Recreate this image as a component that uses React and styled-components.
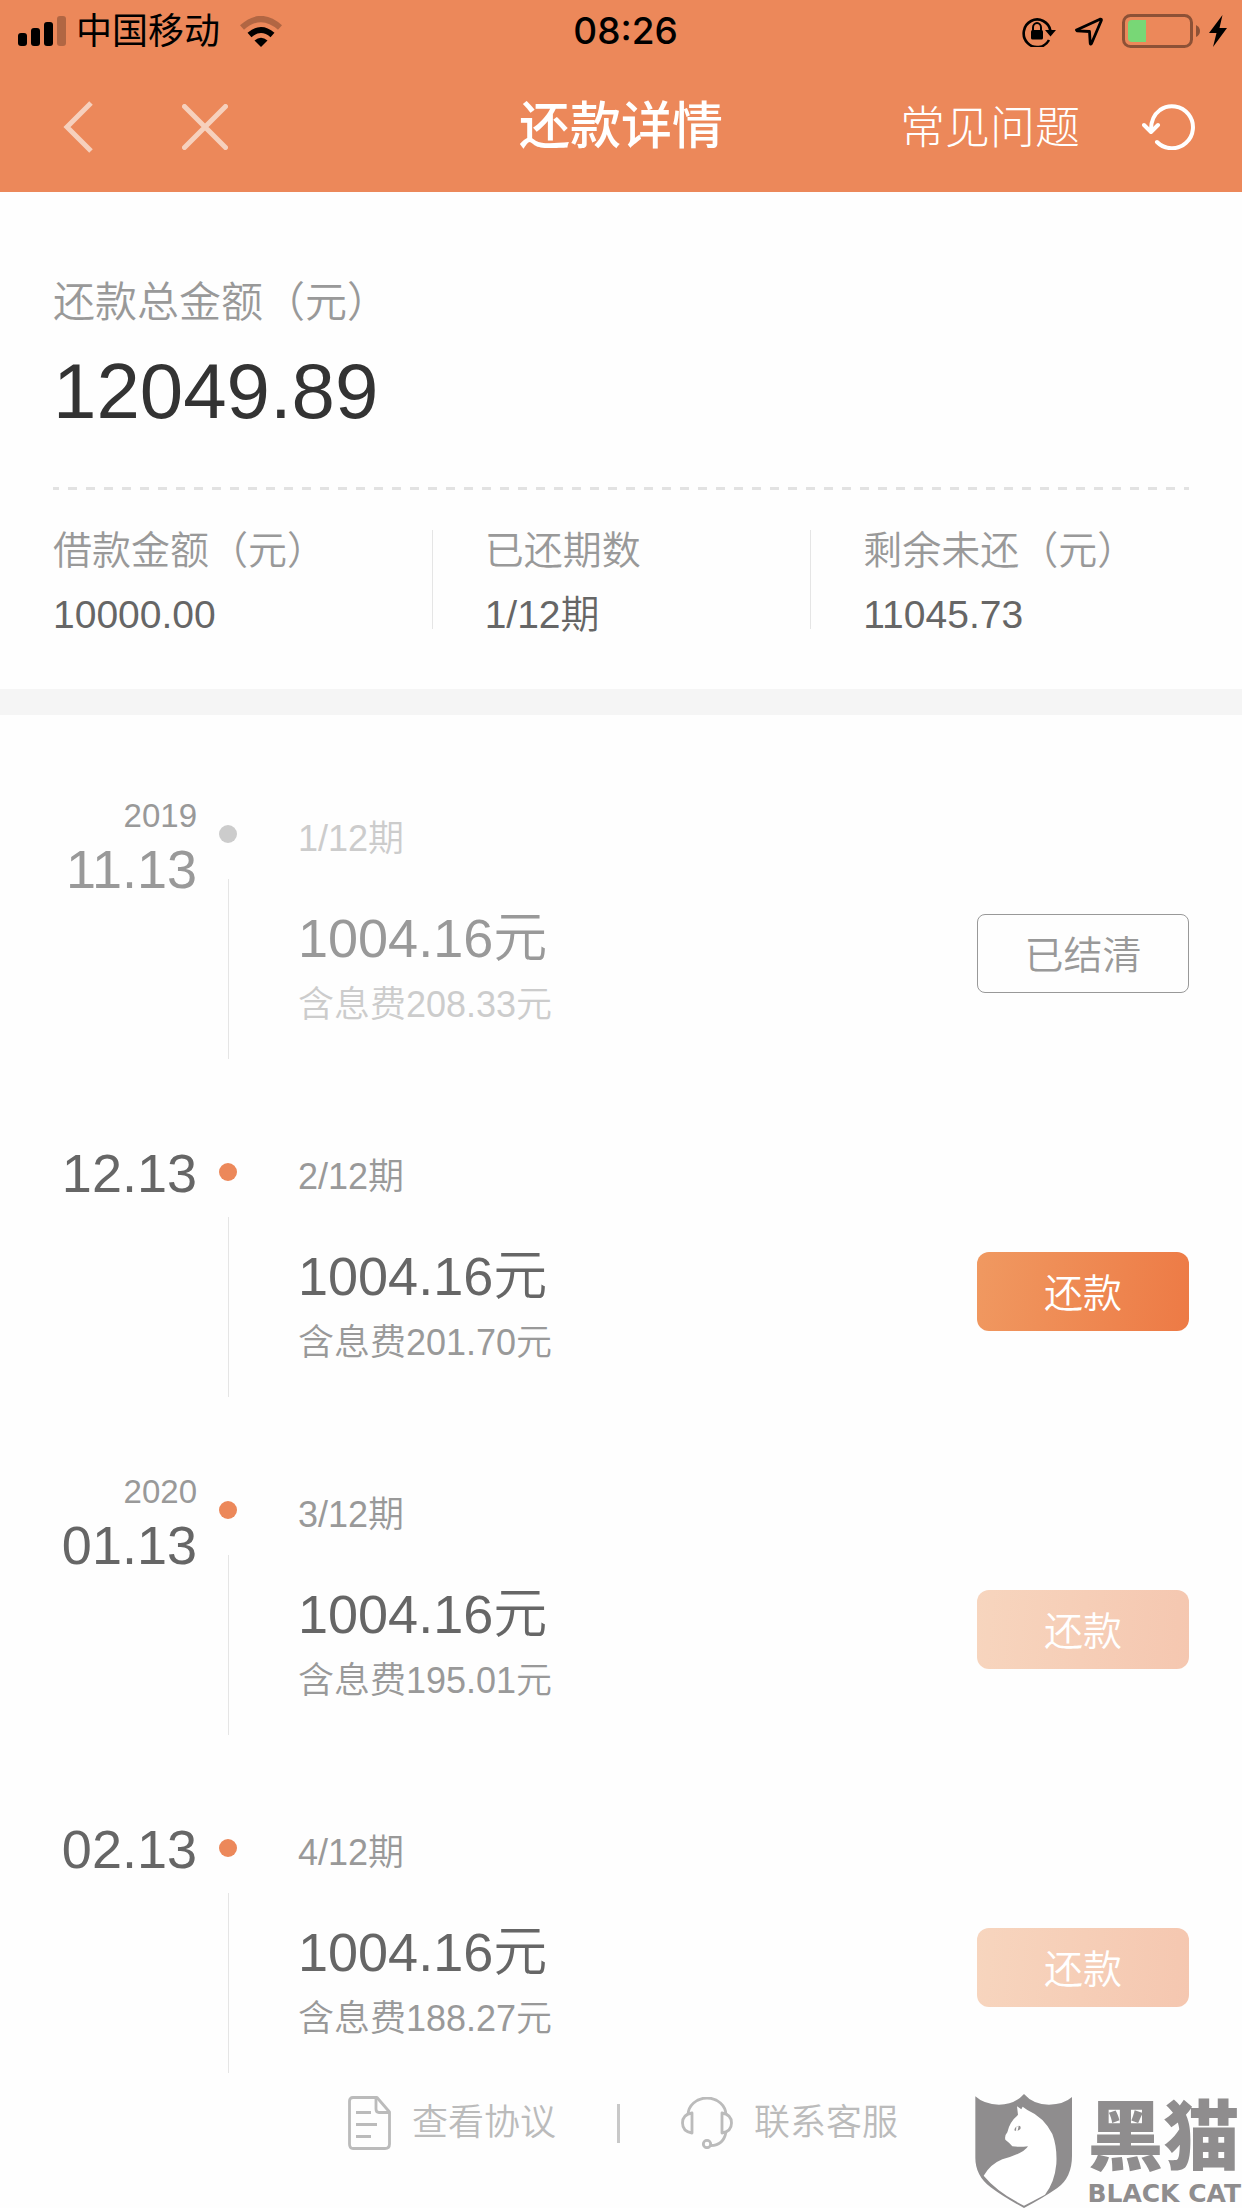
import React from 'react'
import styled, { createGlobalStyle } from 'styled-components'

const colors = {
  brand: '#ec885a',
  page: '#fefefe',
  dark: '#333333',
  text: '#666666',
  muted: '#999999',
  faded: '#cccccc',
  line: '#e5e5e5',
  footer: '#bbbbbb',
  logo: '#8f8d8e',
}

const stats = [
  { label: '借款金额（元）', value: '10000.00' },
  { label: '已还期数', value: '1/12期' },
  { label: '剩余未还（元）', value: '11045.73' },
]

const plans = [
  { year: '2019', date: '11.13', period: '1/12期', amount: '1004.16元', fee: '含息费208.33元', status: 'done' },
  { date: '12.13', period: '2/12期', amount: '1004.16元', fee: '含息费201.70元', status: 'due' },
  { year: '2020', date: '01.13', period: '3/12期', amount: '1004.16元', fee: '含息费195.01元', status: 'later' },
  { date: '02.13', period: '4/12期', amount: '1004.16元', fee: '含息费188.27元', status: 'later' },
]

const SignalIcon = () => (
  <svg width="49" height="30" viewBox="0 0 49 30" aria-hidden="true">
    <rect x="0" y="17" width="9" height="13" rx="3" />
    <rect x="13" y="12" width="9" height="18" rx="3" />
    <rect x="26" y="6" width="9" height="24" rx="3" />
    <rect x="39" y="0" width="9" height="30" rx="3" opacity="0.25" />
  </svg>
)

const WifiIcon = () => (
  <svg width="42" height="31" viewBox="0 0 42 31" aria-hidden="true">
    <path d="M2 11.5 Q21 -5.5 40 11.5" fill="none" stroke="#000" strokeWidth="6" opacity="0.25" />
    <path d="M9.500 19 Q21 9 32.500 19" fill="none" stroke="#000" strokeWidth="6" />
    <path d="M14.500 24.500 Q21 19 27.500 24.500 L21 31Z" />
  </svg>
)

const LockIcon = () => (
  <svg width="34" height="31" viewBox="0 0 34 31" aria-hidden="true">
    <path d="M27 24 A13.500 13.800 0 1 1 28.500 15" fill="none" stroke="#000" strokeWidth="2.600" />
    <path d="M23 14 H34 L28.500 20.500Z" />
    <rect x="9" y="14" width="12" height="9.500" rx="1.500" />
    <path d="M11 15 V11.500 A4 4.500 0 0 1 19 11.500 V15" fill="none" stroke="#000" strokeWidth="2" />
  </svg>
)

const LocationIcon = () => (
  <svg width="28" height="29" viewBox="0 0 28 29" aria-hidden="true">
    <path
      d="M1.500 13 L25 2.200 Q26.800 1.800 26.300 3.500 L16.500 26.500 Q15.400 28 15.200 26 L14.500 14.500 L2 13.800 Z"
      fill="none"
      stroke="#000"
      strokeWidth="2.800"
      strokeLinejoin="round"
    />
  </svg>
)

const BatteryIcon = () => (
  <svg width="79" height="34" viewBox="0 0 79 34" aria-hidden="true">
    <rect x="1.500" y="1.500" width="68" height="31" rx="7" fill="none" stroke="#000" strokeOpacity="0.4" strokeWidth="3" />
    <path d="M10 6 H24 V28 H10 Q6 28 6 24 V10 Q6 6 10 6Z" fill="#78d776" />
    <path d="M74 11 Q78 13 78 17 Q78 21 74 23Z" opacity="0.4" />
  </svg>
)

const BoltIcon = () => (
  <svg width="18" height="32" viewBox="0 0 18 32" aria-hidden="true">
    <path d="M13.500 0 L0 18 H7.500 L4 32 L18 13 H10.500Z" />
  </svg>
)

const BackIcon = () => (
  <svg width="30" height="52" viewBox="0 0 30 52" fill="none" stroke="#f6d0bd" strokeWidth="5" aria-hidden="true">
    <path d="M28 2 L4 26 L28 50" />
  </svg>
)

const CloseIcon = () => (
  <svg width="46" height="46" viewBox="0 0 46 46" fill="none" stroke="#f6d0bd" strokeWidth="5" strokeLinecap="round" aria-hidden="true">
    <path d="M2.500 2.500 L43.500 43.500 M43.500 2.500 L2.500 43.500" />
  </svg>
)

const RefreshIcon = () => (
  <svg width="54" height="46" viewBox="0 0 54 46" fill="none" stroke="#fff" strokeWidth="4" strokeLinecap="round" strokeLinejoin="round" aria-hidden="true">
    <path d="M9 27 Q8.500 13 18 6 A21 21 0 1 1 15 38" />
    <path d="M2 21 L9 28 L16 21" />
  </svg>
)

const DocumentIcon = () => (
  <svg width="43" height="54" viewBox="0 0 43 54" fill="none" stroke="currentColor" strokeWidth="2.800" strokeLinejoin="round" aria-hidden="true">
    <path d="M5 1.500 H29 L41.500 16 V48 Q41.500 52.500 37 52.500 H5 Q1.500 52.500 1.500 48 V5 Q1.500 1.500 5 1.500Z" />
    <path d="M28 2 V13 Q28 16.500 31 16.500 H41" />
    <path d="M8 16.500 H23 M8 28.500 H29 M8 40.500 H23" />
  </svg>
)

const HeadsetIcon = () => (
  <svg width="52" height="52" viewBox="0 0 52 52" fill="none" stroke="currentColor" strokeWidth="2.800" strokeLinejoin="round" aria-hidden="true">
    <path d="M7 18 A19 17 0 0 1 45 18" />
    <path d="M11 16 V36 Q1.500 34.500 1.500 26 Q1.500 17.500 11 16Z" />
    <path d="M41 16 V36 Q50.500 34.500 50.500 26 Q50.500 17.500 41 16Z" />
    <path d="M45 35 Q42.500 48.500 30 48.500" />
    <circle cx="26" cy="47" r="3.700" />
  </svg>
)

const ShieldCat = () => (
  <svg width="97" height="114" viewBox="93 70 291 342" aria-hidden="true">
    <path
      fill={colors.logo}
      d="M94 77 Q120 101 165 102 Q212 102 240 70 Q268 102 315 102 Q360 101 384 79 V255 Q384 320 340 352 Q300 380 240 412 Q180 380 140 350 Q94 315 94 262Z"
    />
    <path
      fill="#fff"
      d="M119 315 Q140 280 175 266 Q240 248 252 227 Q225 230 205 227 Q195 215 184 207 Q181 195 190 185 Q197 153 222 133 L219 107 L232 116 L236 108 L250 118 Q300 140 325 190 Q340 230 337 280 Q332 335 303 372 L240 405 Q160 365 119 315Z"
    />
    <path fill={colors.logo} d="M211 179 Q212 167 225 165 Q232 166 229 175 Q224 182 214 180Z" />
    <path fill="#fff" d="M217 168 L224 166 L221 180 L216 181Z" />
  </svg>
)

const buttonText = { done: '已结清', due: '还款', later: '还款' }

const Plan = ({ plan }) => {
  const done = plan.status === 'done'
  return (
    <PlanRow>
      <PlanDate $hasYear={Boolean(plan.year)}>
        {plan.year && <Year>{plan.year}</Year>}
        <Day $done={done}>{plan.date}</Day>
      </PlanDate>
      <Marker>
        <Dot $done={done} />
        <Track />
      </Marker>
      <PlanBody>
        <Note $done={done}>{plan.period}</Note>
        <Amount $done={done}>{plan.amount}</Amount>
        <Note $done={done}>{plan.fee}</Note>
      </PlanBody>
      <PayButton type="button" $status={plan.status} disabled={plan.status !== 'due'}>
        {buttonText[plan.status]}
      </PayButton>
    </PlanRow>
  )
}

const App = () => (
  <Page>
    <GlobalStyle />
    <Header>
      <StatusBar>
        <StatusGroup>
          <SignalIcon />
          <Carrier>中国移动</Carrier>
          <WifiIcon />
        </StatusGroup>
        <Clock>08:26</Clock>
        <StatusEnd>
          <LockIcon />
          <LocationIcon />
          <Power>
            <BatteryIcon />
            <BoltIcon />
          </Power>
        </StatusEnd>
      </StatusBar>
      <NavBar>
        <NavStart>
          <IconButton type="button" aria-label="返回">
            <BackIcon />
          </IconButton>
          <IconButton type="button" aria-label="关闭">
            <CloseIcon />
          </IconButton>
        </NavStart>
        <Title>还款详情</Title>
        <NavEnd>
          <HelpLink href="#help">常见问题</HelpLink>
          <IconButton type="button" aria-label="刷新">
            <RefreshIcon />
          </IconButton>
        </NavEnd>
      </NavBar>
    </Header>

    <main>
      <Summary>
        <TotalLabel>还款总金额（元）</TotalLabel>
        <Total>12049.89</Total>
        <Dashes />
        <Stats>
          {stats.map(stat => (
            <Stat key={stat.label}>
              <StatLabel>{stat.label}</StatLabel>
              <StatValue>{stat.value}</StatValue>
            </Stat>
          ))}
        </Stats>
      </Summary>
      <PlanList>
        {plans.map(plan => (
          <Plan key={plan.date} plan={plan} />
        ))}
      </PlanList>
    </main>

    <Footer>
      <FooterLink href="#agreement">
        <DocumentIcon />
        查看协议
      </FooterLink>
      <FooterDivider />
      <FooterLink href="#service">
        <HeadsetIcon />
        联系客服
      </FooterLink>
    </Footer>

    <Brand>
      <ShieldCat />
      <BrandText>
        <BrandName>黑猫</BrandName>
        <BrandLatin>BLACK CAT</BrandLatin>
      </BrandText>
    </Brand>
  </Page>
)

export default App

const GlobalStyle = createGlobalStyle`
  * {
    box-sizing: border-box;
  }

  body {
    margin: 0;
    background: ${colors.page};
    font-family: 'Liberation Sans', 'Noto Sans CJK SC', sans-serif;
    font-weight: 350;
  }

  h1, p, ul, dl, dd {
    margin: 0;
    padding: 0;
  }

  svg {
    display: block;
    flex-shrink: 0;
  }
`

const Page = styled.div`
  position: relative;
  display: flex;
  flex-direction: column;
  min-height: 100vh;
`

const Header = styled.header`
  background: ${colors.brand};
`

const StatusBar = styled.div`
  display: grid;
  grid-template-columns: 1fr auto 1fr;
  align-items: center;
  height: 62px;
  padding: 0 15px 0 18px;
  color: #000;
`

const StatusGroup = styled.div`
  display: flex;
  align-items: center;
`

const StatusEnd = styled(StatusGroup)`
  justify-content: flex-end;
  gap: 19px;
`

const Power = styled(StatusGroup)`
  gap: 8px;
`

const Carrier = styled.span`
  margin: 0 20px 0 9px;
  padding-top: 2px;
  font-size: 36px;
  font-weight: 400;
  line-height: 40px;
`

const Clock = styled.span`
  padding-left: 6px;
  font-family: Inter, sans-serif;
  font-size: 37px;
  font-weight: 500;
  line-height: 40px;
`

const NavBar = styled.nav`
  display: grid;
  grid-template-columns: 1fr auto 1fr;
  align-items: center;
  height: 130px;
`

const NavStart = styled.div`
  display: flex;
  align-items: center;
  gap: 89px;
  padding-left: 63px;
`

const NavEnd = styled.div`
  display: flex;
  align-items: center;
  justify-content: flex-end;
  gap: 62px;
  padding-right: 46px;
`

const IconButton = styled.button`
  padding: 0;
  border: 0;
  background: none;
`

const Title = styled.h1`
  color: #fff;
  font-size: 51px;
  font-weight: 500;
  line-height: 60px;
`

const HelpLink = styled.a`
  padding-top: 3px;
  color: #fff;
  font-size: 45px;
  font-weight: 300;
  line-height: 60px;
  text-decoration: none;
`

const Summary = styled.section`
  padding: 81px 53px 53px;
  border-bottom: 26px solid #f5f5f5;
`

const TotalLabel = styled.p`
  color: ${colors.muted};
  font-size: 42px;
  line-height: 60px;
`

const Total = styled.p`
  margin-top: 8px;
  color: ${colors.dark};
  font-size: 78px;
  line-height: 100px;
`

const Dashes = styled.div`
  height: 3px;
  margin: 46px 0 40px;
  background: repeating-linear-gradient(90deg, #e2e2e2 0 9px, transparent 9px 18px) -3px 0;
`

const Stats = styled.dl`
  display: grid;
  grid-template-columns: repeat(3, 1fr);
`

const Stat = styled.div`
  display: grid;
  gap: 24px;
  padding: 1px 0 1px 53px;
  background: linear-gradient(${colors.line}, ${colors.line}) 0 0 / 1px 99px no-repeat;
  font-size: 39px;
  line-height: 40px;

  &:first-child {
    padding-left: 0;
    background: none;
  }
`

const StatLabel = styled.dt`
  color: ${colors.muted};
`

const StatValue = styled.dd`
  color: ${colors.text};
`

const PlanList = styled.ul`
  display: grid;
  gap: 72px;
  padding: 78px 53px 0;
  list-style: none;
`

const PlanRow = styled.li`
  display: grid;
  grid-template-columns: 144px 62px 1fr auto;
  min-height: 266px;
`

const PlanDate = styled.div`
  padding-top: ${props => (props.$hasYear ? 0 : 12)}px;
  text-align: right;
`

const Year = styled.p`
  color: ${colors.muted};
  font-size: 33px;
  line-height: 46px;
`

const Day = styled.p`
  color: ${props => (props.$done ? colors.muted : colors.text)};
  font-size: 54px;
  line-height: 60px;
`

const Marker = styled.div`
  display: flex;
  flex-direction: column;
  align-items: center;
  gap: 36px;
  padding-top: 32px;
`

const Dot = styled.span`
  width: 18px;
  height: 18px;
  border-radius: 50%;
  background: ${props => (props.$done ? colors.faded : colors.brand)};
`

const Track = styled.span`
  flex: 1;
  width: 1px;
  background: ${colors.line};
`

const PlanBody = styled.div`
  padding: 19px 0 0 39px;
`

const Note = styled.p`
  color: ${props => (props.$done ? colors.faded : colors.muted)};
  font-size: 36px;
  line-height: 54px;
`

const Amount = styled.p`
  margin-top: 32px;
  color: ${props => (props.$done ? colors.muted : colors.text)};
  font-size: 54px;
  line-height: 80px;
`

const buttonStyles = {
  done: `
    border: 1px solid ${colors.muted};
    border-radius: 8px;
    background: none;
    color: ${colors.muted};
  `,
  due: `
    background: linear-gradient(100deg, #f09961, #ed7a45);
  `,
  later: `
    background: linear-gradient(95deg, #f7d5be, #f5c7b0);
  `,
}

const PayButton = styled.button`
  width: 212px;
  height: 79px;
  margin-top: 121px;
  padding: 0 0 4px;
  border: 0;
  border-radius: 12px;
  color: #fff;
  font-family: inherit;
  font-size: 39px;
  font-weight: inherit;
  ${props => buttonStyles[props.$status]}
`

const Footer = styled.footer`
  display: flex;
  align-items: center;
  justify-content: center;
  gap: 61px;
  margin-top: auto;
  padding: 20px 0 56px 4px;
`

const FooterLink = styled.a`
  display: flex;
  align-items: center;
  gap: 21px;
  color: ${colors.footer};
  font-size: 36px;
  line-height: 60px;
  text-decoration: none;
`

const FooterDivider = styled.span`
  width: 3px;
  height: 39px;
  background: #c8c8c8;
`

// floats over the bottom right corner of the page
const Brand = styled.div`
  position: absolute;
  right: 1px;
  bottom: 1px;
  display: flex;
  gap: 15px;
  color: ${colors.logo};
`

const BrandText = styled.div`
  padding-top: 1px;
`

const BrandName = styled.p`
  font-size: 76px;
  font-weight: 900;
  line-height: 85px;
`

const BrandLatin = styled.p`
  font-family: 'DejaVu Sans', sans-serif;
  font-size: 25px;
  font-weight: 700;
  line-height: 28px;
  white-space: nowrap;
`
